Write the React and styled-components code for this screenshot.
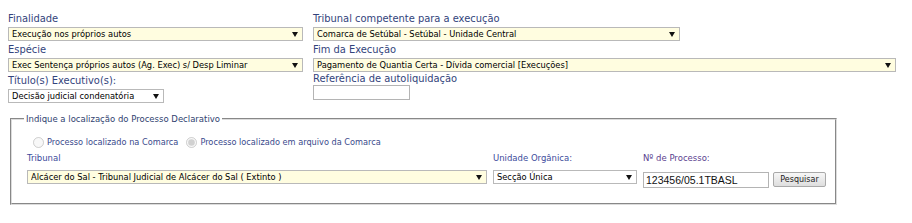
import React from "react";
import styled, { createGlobalStyle } from "styled-components";

const GlobalStyle = createGlobalStyle`
  html, body { margin: 0; padding: 0; background: #fff; }
  * { box-sizing: border-box; }
`;

const Page = styled.div`
  padding: 10px 8px 0 8px;
  font-family: "DejaVu Sans", Verdana, sans-serif;
  font-size: 10px;
`;

const TopGrid = styled.div`
  display: grid;
  grid-template-columns: 295px 1fr;
  column-gap: 10px;
`;

const Field = styled.div`
  display: flex;
  flex-direction: column;
  align-items: flex-start;
`;

const FieldLabel = styled.label`
  font-family: "DejaVu Sans Condensed", "DejaVu Sans", sans-serif;
  font-stretch: condensed;
  font-size: 11px;
  line-height: ${(p) => (p.$tight ? "13px" : "17px")};
  color: #33447c;
  white-space: nowrap;
`;

const SelectWrap = styled.div`
  position: relative;
  width: ${(p) => p.$w}px;
  height: 14px;
`;

const NativeSelect = styled.select`
  appearance: none;
  -webkit-appearance: none;
  display: block;
  width: 100%;
  height: 14px;
  margin: 0;
  border: 1px solid #b9b9b9;
  border-radius: 0;
  background: ${(p) => (p.$yellow ? "#fffde0" : "#fff")};
  font-family: "DejaVu Sans", Verdana, sans-serif;
  font-size: 8.3px;
  line-height: 12px;
  color: #000;
  padding: 0 14px 0 3px;
  outline: none;
`;

const Arrow = styled.span`
  position: absolute;
  right: 5px;
  top: 50%;
  margin-top: -2px;
  width: 0;
  height: 0;
  border-left: 3px solid transparent;
  border-right: 3px solid transparent;
  border-top: 5px solid #111;
  pointer-events: none;
`;

const TextInput = styled.input`
  display: block;
  width: ${(p) => p.$w}px;
  height: ${(p) => p.$h}px;
  margin: ${(p) => (p.$offset ? `${p.$offset}px 0 0 0` : "0")};
  border: 1px solid #b4b4b4;
  background: #fff;
  padding: 0 2px;
  font-family: "Liberation Sans", Arial, sans-serif;
  font-size: 10.5px;
  color: #111;
  outline: none;
`;

const Fieldset = styled.fieldset`
  margin: 11px 0 0 2px;
  width: 827px;
  border: 2px groove #dcdcdc;
  padding: 11px 15px 15px 15px;
  min-width: 0;
`;

const Legend = styled.legend`
  font-family: "DejaVu Sans", Verdana, sans-serif;
  font-size: 8.5px;
  color: #2f3f70;
  padding: 0 2px;
  margin-left: -3px;
`;

const RadioRow = styled.div`
  display: flex;
  align-items: center;
  gap: 8px;
  height: 14px;
  padding-left: 6px;
`;

const RadioOption = styled.label`
  display: inline-flex;
  align-items: center;
  gap: 3px;
  font-size: 8.2px;
  color: #3a4a8c;
  white-space: nowrap;
`;

const Radio = styled.input`
  width: 11px;
  height: 11px;
  margin: 0;
`;

const ProcGrid = styled.div`
  display: grid;
  grid-template-columns: 460px 144px auto;
  column-gap: 6px;
  margin-top: 2px;
  align-items: start;
`;

const SmallLabel = styled.span`
  font-size: 8.5px;
  line-height: 15px;
  color: ${(p) => p.$color || "#3d4c9c"};
  white-space: nowrap;
`;

const ControlRow = styled.div`
  display: flex;
  align-items: flex-start;
  gap: 4px;
  margin-top: 4px;
`;

const Button = styled.button`
  display: block;
  height: 15px;
  width: 53px;
  margin: 2px 0 0 0;
  padding: 0;
  border: 1px solid #a9a9a9;
  border-radius: 2px;
  background: linear-gradient(#f7f7f7, #dedede);
  font-family: "DejaVu Sans", Verdana, sans-serif;
  font-size: 8px;
  color: #222;
`;

function Select({ w, yellow, value }) {
  return (
    <SelectWrap $w={w}>
      <NativeSelect $yellow={yellow} defaultValue={value}>
        <option value={value}>{value}</option>
      </NativeSelect>
      <Arrow />
    </SelectWrap>
  );
}

export default function App() {
  return (
    <>
      <GlobalStyle />
      <Page>
        <TopGrid>
          <Field>
            <FieldLabel>Finalidade</FieldLabel>
            <Select w={295} yellow value="Execução nos próprios autos" />
          </Field>
          <Field>
            <FieldLabel>Tribunal competente para a execução</FieldLabel>
            <Select w={367} yellow value="Comarca de Setúbal - Setúbal - Unidade Central" />
          </Field>
          <Field>
            <FieldLabel>Espécie</FieldLabel>
            <Select w={295} yellow value="Exec Sentença próprios autos (Ag. Exec) s/ Desp Liminar" />
          </Field>
          <Field>
            <FieldLabel>Fim da Execução</FieldLabel>
            <Select w={583} yellow value="Pagamento de Quantia Certa - Dívida comercial [Execuções]" />
          </Field>
          <Field>
            <FieldLabel>Título(s) Executivo(s):</FieldLabel>
            <Select w={156} value="Decisão judicial condenatória" />
          </Field>
          <Field>
            <FieldLabel $tight>Referência de autoliquidação</FieldLabel>
            <TextInput $w={97} $h={15} />
          </Field>
        </TopGrid>

        <Fieldset>
          <Legend>Indique a localização do Processo Declarativo</Legend>
          <RadioRow>
            <RadioOption>
              <Radio type="radio" name="loc" disabled />
              Processo localizado na Comarca
            </RadioOption>
            <RadioOption>
              <Radio type="radio" name="loc" disabled defaultChecked />
              Processo localizado em arquivo da Comarca
            </RadioOption>
          </RadioRow>
          <ProcGrid>
            <Field>
              <SmallLabel>Tribunal</SmallLabel>
              <ControlRow>
                <Select w={460} yellow value="Alcácer do Sal - Tribunal Judicial de Alcácer do Sal ( Extinto )" />
              </ControlRow>
            </Field>
            <Field>
              <SmallLabel>Unidade Orgânica:</SmallLabel>
              <ControlRow>
                <Select w={144} value="Secção Única" />
              </ControlRow>
            </Field>
            <Field>
              <SmallLabel $color="#5b3f8f">Nº de Processo:</SmallLabel>
              <ControlRow>
                <TextInput $w={126} $h={16} $offset={2} defaultValue="123456/05.1TBASL" />
                <Button>Pesquisar</Button>
              </ControlRow>
            </Field>
          </ProcGrid>
        </Fieldset>
      </Page>
    </>
  );
}
